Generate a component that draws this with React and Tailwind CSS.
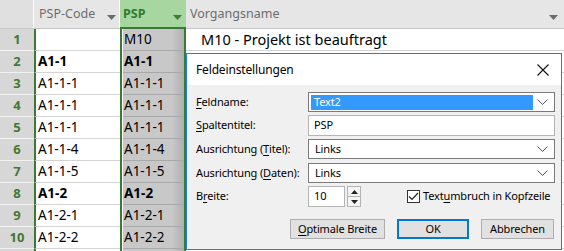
import React from 'react';

const rows = [
  { n: 1, code: '', psp: 'M10', name: 'M10 - Projekt ist beauftragt' },
  { n: 2, code: 'A1-1', psp: 'A1-1', bold: true },
  { n: 3, code: 'A1-1-1', psp: 'A1-1-1' },
  { n: 4, code: 'A1-1-1', psp: 'A1-1-1' },
  { n: 5, code: 'A1-1-1', psp: 'A1-1-1' },
  { n: 6, code: 'A1-1-4', psp: 'A1-1-4' },
  { n: 7, code: 'A1-1-5', psp: 'A1-1-5' },
  { n: 8, code: 'A1-2', psp: 'A1-2', bold: true },
  { n: 9, code: 'A1-2-1', psp: 'A1-2-1' },
  { n: 10, code: 'A1-2-2', psp: 'A1-2-2' },
  { n: 11, code: '', psp: '' },
];

const Tri = ({ color = '#6b6b6b' }) => (
  <svg width="9" height="5" viewBox="0 0 9 5"><path d="M0 0h9L4.5 5z" fill={color} /></svg>
);

const Chevron = () => (
  <svg width="11" height="6" viewBox="0 0 11 6"><path d="M0.5 0.5l5 5 5-5" fill="none" stroke="#555" strokeWidth="1" /></svg>
);

const Select = ({ value, selected }) => (
  <div className="flex h-[20px] items-center border border-[#7a7a7a] bg-white">
    {selected ? (
      <div className="ml-[2px] flex h-[15px] w-[222px] items-center bg-[#3399ff] pl-[3px] text-white">{value}</div>
    ) : (
      <div className="pl-[6px]">{value}</div>
    )}
    <div className="ml-auto mr-[6px] flex items-center"><Chevron /></div>
  </div>
);

const Label = ({ pre, u, post }) => (
  <div className="w-[112px] shrink-0 whitespace-nowrap">
    {pre}<span className="underline underline-offset-2">{u}</span>{post}
  </div>
);

const FieldDialog = () => (
  <div className="absolute left-[186px] top-[53px] h-[197px] w-[376px] border border-[#1883d7] bg-[#f0f0f0] font-['Noto_Sans',sans-serif] text-[11px] tracking-[-0.15px] text-black">
    <div className="flex h-[31px] items-center bg-white pl-[9px] pr-[12px] text-[12px]">
      <span>Feldeinstellungen</span>
      <svg className="ml-auto" width="12" height="12" viewBox="0 0 12 12">
        <path d="M0.5 0.5l11 11M11.5 0.5l-11 11" stroke="#111" strokeWidth="1.1" />
      </svg>
    </div>
    <div className="flex flex-col pl-[9px] pr-[6px]">
      <div className="mt-[7px] flex h-[20px] items-center">
        <Label u="F" post="eldname:" />
        <div className="flex-1"><Select value="Text2" selected /></div>
      </div>
      <div className="mt-[3px] flex h-[21px] items-center">
        <Label u="S" post="paltentitel:" />
        <div className="flex h-[21px] flex-1 items-center border border-[#b4b4b4] bg-white pl-[5px]">PSP</div>
      </div>
      <div className="mt-[3px] flex h-[20px] items-center">
        <Label pre="Ausrichtung (" u="T" post="itel):" />
        <div className="flex-1"><Select value="Links" /></div>
      </div>
      <div className="mt-[4px] flex h-[20px] items-center">
        <Label pre="Ausrichtung (" u="D" post="aten):" />
        <div className="flex-1"><Select value="Links" /></div>
      </div>
      <div className="mt-[3px] flex h-[21px] items-center">
        <Label pre="B" u="r" post="eite:" />
        <div className="flex h-[21px] w-[37px] items-center border border-[#b4b4b4] bg-white pl-[5px]">10</div>
        <div className="ml-[2px] flex h-[21px] w-[14px] flex-col">
          <div className="flex flex-1 items-center justify-center border border-[#b4b4b4] bg-[#f4f4f4]">
            <svg width="7" height="4" viewBox="0 0 7 4"><path d="M0 4h7L3.5 0z" fill="#222" /></svg>
          </div>
          <div className="flex flex-1 items-center justify-center border border-t-0 border-[#b4b4b4] bg-[#f4f4f4]">
            <svg width="7" height="4" viewBox="0 0 7 4"><path d="M0 0h7L3.5 4z" fill="#222" /></svg>
          </div>
        </div>
        <div className="ml-[46px] flex h-[13px] w-[13px] shrink-0 items-center justify-center border border-[#333] bg-white">
          <svg width="11" height="9" viewBox="0 0 11 9"><path d="M1 4.5l3 3 6-6.5" fill="none" stroke="#222" strokeWidth="1.2" /></svg>
        </div>
        <div className="ml-[3px] whitespace-nowrap">Text<span className="underline underline-offset-2">u</span>mbruch in Kopfzeile</div>
      </div>
      <div className="mt-[12px] flex h-[20px] items-center pl-[94px]">
        <div className="flex h-[20px] w-[95px] items-center justify-center whitespace-nowrap border border-[#adadad] bg-[#e1e1e1]">
          <span className="underline underline-offset-2">O</span>ptimale Breite
        </div>
        <div className="ml-[12px] flex h-[20px] w-[72px] items-center justify-center border-2 border-[#0078d7] bg-[#e1e1e1]">OK</div>
        <div className="ml-[12px] flex h-[20px] w-[73px] items-center justify-center border border-[#adadad] bg-[#e1e1e1]">Abbrechen</div>
      </div>
    </div>
  </div>
);

export default function App() {
  return (
    <div className="relative h-[251px] w-[564px] overflow-hidden bg-white font-['Noto_Sans',sans-serif]">
      <div className="flex h-[29px] border-b border-[#c6c6c6] bg-[#e6e6e6] text-[12.5px] text-[#6d6d6d]">
        <div className="w-[34px] shrink-0 border-r border-white bg-[#e0e0e0]" />
        <div className="flex w-[86px] shrink-0 items-center border-r border-white pl-[5px] pr-[3px]">
          <span>PSP-Code</span>
          <span className="ml-auto mt-[6px]"><Tri /></span>
        </div>
        <div className="flex w-[66px] shrink-0 items-center bg-[#a8d6a0] pl-[3px] pr-[4px] font-bold text-[#2f7d2f]">
          <span>PSP</span>
          <span className="ml-auto mt-[6px]"><Tri color="#3c7d32" /></span>
        </div>
        <div className="flex flex-1 items-center pl-[4px] pr-[6px]">
          <span>Vorgangsname</span>
          <span className="ml-auto mt-[6px]"><Tri /></span>
        </div>
      </div>
      {rows.map((r, i) => (
        <div key={r.n} className="flex h-[22px] text-[13.5px] text-black">
          <div className="flex w-[34px] shrink-0 items-center justify-center border-b border-[#f2f2f2] bg-[#d7d7d7] text-[13px] font-bold text-[#3f7a33]">
            {r.n < 11 ? r.n : ''}
          </div>
          <div className={`flex w-[86px] shrink-0 items-center border-b border-l-2 border-b-[#d4d4d4] border-l-[#3b7a36] pl-[2px] ${r.bold ? 'font-bold' : ''}`}>
            {r.code}
          </div>
          <div className={`flex w-[66px] shrink-0 border-x-2 border-[#3b7a36] ${i === 0 ? 'border-t-2 -mt-[2px] h-[24px]' : ''}`}>
            <div className={`ml-[1px] flex flex-1 items-center border-b border-[#a9a9a9] bg-gradient-to-r from-[#c8c8c8] from-80% to-[#b0b0b0] pl-[1px] ${r.bold ? 'font-bold' : ''}`}>
              {r.psp}
            </div>
          </div>
          <div className="flex flex-1 items-center border-b border-[#d4d4d4] pl-[15px] text-[14.5px]">
            {r.name || ''}
          </div>
        </div>
      ))}
      <FieldDialog />
    </div>
  );
}
